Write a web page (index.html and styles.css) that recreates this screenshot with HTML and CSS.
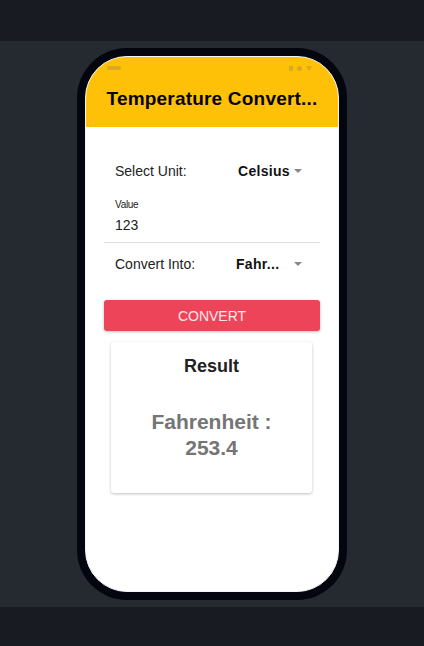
FILE: index.html
```
<!DOCTYPE html>
<html>
<head>
<meta charset="utf-8">
<link rel="stylesheet" href="styles.css">
</head>
<body>
<div class="topbar"></div>
<div class="stage">
  <div class="phone">
    <div class="screen">
      <div class="header">
        <div class="status">
          <span class="pill"></span>
          <span class="icons">
            <span class="ic sq"></span>
            <span class="ic dot"></span>
            <span class="ic tri"></span>
          </span>
        </div>
        <div class="title">Temperature Convert...</div>
      </div>
      <div class="content">
        <div class="row">
          <span class="label">Select Unit:</span>
          <span class="dropdown"><span class="dd-text celsius">Celsius</span><span class="arrow"></span></span>
        </div>
        <div class="field">
          <div class="field-label">Value</div>
          <div class="field-value">123</div>
        </div>
        <div class="row row-second">
          <span class="label">Convert Into:</span>
          <span class="dropdown"><span class="dd-text">Fahr...</span><span class="arrow"></span></span>
        </div>
        <div class="button">CONVERT</div>
        <div class="card">
          <div class="card-title">Result</div>
          <div class="card-value">Fahrenheit :<br>253.4</div>
        </div>
      </div>
    </div>
  </div>
</div>
<div class="bottombar"></div>
</body>
</html>
```
FILE: styles.css
```
html, body {
  margin: 0;
  padding: 0;
}
body {
  width: 424px;
  height: 646px;
  background: #181b21;
  font-family: "Liberation Sans", Arial, sans-serif;
  overflow: hidden;
}
.topbar {
  height: 41px;
  background: #181b21;
}
.bottombar {
  height: 39px;
  background: #181b21;
}
.stage {
  height: 566px;
  background: #252930;
  display: flex;
  justify-content: center;
  padding-top: 7px;
  box-sizing: border-box;
}
.phone {
  width: 270px;
  height: 552px;
  box-sizing: border-box;
  background: #03060e;
  border-radius: 50px;
  padding: 8px;
}
.screen {
  height: 100%;
  box-sizing: border-box;
  background: #fff;
  border-radius: 42px;
  border: 1px solid #f4f4f4;
  overflow: hidden;
  display: flex;
  flex-direction: column;
}
.header {
  background: #ffc107;
  height: 70px;
  display: flex;
  flex-direction: column;
}
.status {
  height: 20px;
  display: flex;
  align-items: center;
  justify-content: space-between;
  padding: 0 26px 0 21px;
  margin-top: 1px;
}
.pill {
  width: 14px;
  height: 4px;
  border-radius: 2px;
  background: #d9aa22;
}
.icons {
  display: flex;
  gap: 4px;
  align-items: center;
}
.ic {
  display: block;
  background: #d9aa22;
}
.sq {
  width: 4px;
  height: 5px;
}
.dot {
  width: 5px;
  height: 5px;
  border-radius: 50%;
}
.tri {
  width: 0;
  height: 0;
  background: none;
  border-left: 3px solid transparent;
  border-right: 3px solid transparent;
  border-top: 5px solid #d9aa22;
}
.title {
  flex: 1;
  display: flex;
  align-items: center;
  justify-content: center;
  font-size: 19px;
  font-weight: bold;
  color: #050505;
  padding-bottom: 8px;
  letter-spacing: 0.2px;
}
.content {
  padding: 26px 18px 0 18px;
  display: flex;
  flex-direction: column;
}
.row {
  height: 36px;
  display: flex;
  align-items: center;
  padding-left: 11px;
  font-size: 14px;
  color: #222;
}
.row-second {
  margin-top: 3px;
}
.label {
  width: 121px;
}
.dropdown {
  width: 68px;
  display: flex;
  align-items: center;
  justify-content: space-between;
}
.dd-text {
  font-weight: bold;
  color: #111;
  letter-spacing: 0.3px;
}
.celsius {
  padding-left: 2px;
}
.arrow {
  width: 0;
  height: 0;
  border-left: 4px solid transparent;
  border-right: 4px solid transparent;
  border-top: 4px solid #888;
  margin-right: 2px;
}
.field {
  margin-top: 10px;
  padding-left: 11px;
  border-bottom: 1px solid #ddd;
  padding-bottom: 7px;
  color: #222;
}
.field-label {
  font-size: 10px;
  line-height: 12px;
  letter-spacing: -0.3px;
}
.field-value {
  font-size: 14px;
  line-height: 20px;
  margin-top: 4px;
}
.button {
  margin-top: 18px;
  height: 31px;
  background: #ee4459;
  border-radius: 3px;
  color: #fde8ea;
  font-size: 14px;
  display: flex;
  align-items: center;
  justify-content: center;
  box-shadow: 0 1px 3px rgba(0,0,0,0.25);
}
.card {
  margin: 11px 8px 0 7px;
  height: 151px;
  box-sizing: border-box;
  border-radius: 3px;
  background: #fff;
  box-shadow: 0 1px 3px rgba(0,0,0,0.25);
  padding-top: 12px;
  text-align: center;
}
.card-title {
  font-size: 18px;
  font-weight: bold;
  color: #222;
  line-height: 24px;
}
.card-value {
  margin-top: 31px;
  font-size: 21px;
  font-weight: bold;
  color: #757575;
  line-height: 26px;
}
```
